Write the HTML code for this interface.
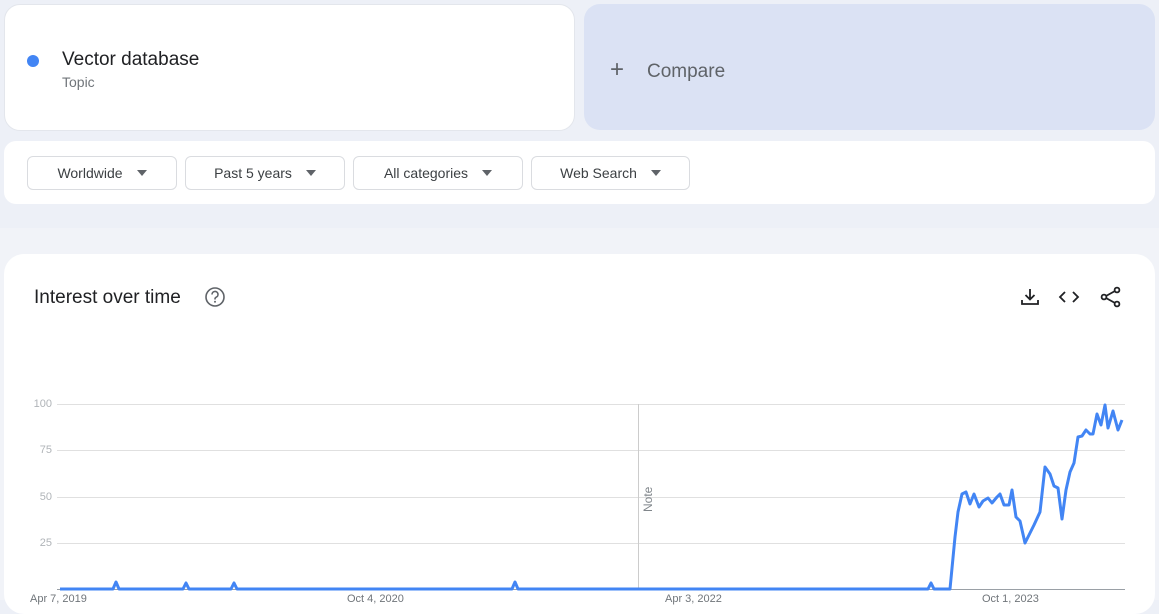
<!DOCTYPE html>
<html><head><meta charset="utf-8"><style>
*{box-sizing:border-box;margin:0;padding:0}
body{width:1159px;height:600px;overflow:hidden;background:#edf0f7;font-family:"Liberation Sans",Arial,sans-serif;position:relative}
.card{position:absolute;background:#fff;border-radius:16px}
.btn{position:absolute;top:156px;height:34px;border:1px solid #dadce0;border-radius:6px;background:#fff;font-size:14px;color:#3c4043;display:flex;align-items:center;justify-content:center;gap:10px}
.btn i{width:0;height:0;border-left:5px solid transparent;border-right:5px solid transparent;border-top:6px solid #5f6368;margin-left:4px}
.yl{position:absolute;left:20px;width:32px;text-align:right;font-size:11px;color:#b0b4b8}
.xl{position:absolute;top:593px;font-size:11px;color:#70757a}
</style></head><body>
<div class="card" style="left:4px;top:4px;width:571px;height:127px;border:1px solid #e3e6ec">
  <div style="position:absolute;left:22px;top:50px;width:12px;height:12px;border-radius:50%;background:#4285f4"></div>
  <div style="position:absolute;left:57px;top:44px;font-size:19px;color:#202124">Vector database</div>
  <div style="position:absolute;left:57px;top:69px;font-size:14px;color:#70757a">Topic</div>
</div>
<div class="card" style="left:584px;top:4px;width:571px;height:126px;background:#dbe2f4">
  <div style="position:absolute;left:26px;top:54px;font-size:24px;color:#5f6368;line-height:24px;font-weight:300">+</div>
  <div style="position:absolute;left:63px;top:57px;font-size:19px;color:#5f6368">Compare</div>
</div>
<div class="card" style="left:4px;top:141px;width:1151px;height:63px;border-radius:12px"></div>
<div class="btn" style="left:27px;width:150px">Worldwide<i></i></div>
<div class="btn" style="left:185px;width:160px">Past 5 years<i></i></div>
<div class="btn" style="left:353px;width:170px">All categories<i></i></div>
<div class="btn" style="left:531px;width:159px">Web Search<i></i></div>
<div style="position:absolute;left:0;top:228px;width:1159px;height:372px;background:#f1f3f8"></div>
<div class="card" style="left:4px;top:254px;width:1151px;height:360px;border-radius:20px"></div>
<div style="position:absolute;left:34px;top:287px;font-size:19px;color:#202124">Interest over time</div>
<svg style="position:absolute;left:204px;top:286px" width="22" height="22" viewBox="0 0 22 22"><circle cx="11" cy="11" r="9" fill="none" stroke="#5f6368" stroke-width="1.6"/><path d="M8 8.5a3 3 0 1 1 4.2 2.7c-.8.4-1.2.9-1.2 1.8v.5" fill="none" stroke="#5f6368" stroke-width="1.6"/><circle cx="11" cy="15.8" r="1" fill="#5f6368"/></svg>
<svg style="position:absolute;left:1018px;top:286px" width="110" height="22" viewBox="0 0 110 22">
<g fill="none" stroke="#202124" stroke-width="1.8">
<path d="M12 3v10M7.5 9l4.5 4.5 4.5-4.5M4 14v4h16v-4"/>
<path d="M47 6l-5 5 5 5M55 6l5 5-5 5"/>
<circle cx="99" cy="4" r="2.4"/><circle cx="86" cy="11" r="2.4"/><circle cx="99" cy="18" r="2.4"/><path d="M88 10l9-5M88 12l9 5"/>
</g></svg>
<svg style="position:absolute;left:0;top:0" width="1159" height="600">
<g stroke="#e0e0e0" stroke-width="1"><line x1="57" y1="404.5" x2="1125" y2="404.5"/><line x1="57" y1="450.5" x2="1125" y2="450.5"/><line x1="57" y1="497.5" x2="1125" y2="497.5"/><line x1="57" y1="543.5" x2="1125" y2="543.5"/></g>
<line x1="57" y1="589.5" x2="1125" y2="589.5" stroke="#9aa0a6"/>
<line x1="638.5" y1="404" x2="638.5" y2="589" stroke="#ccc"/>
<text transform="translate(652,512) rotate(-90)" font-size="12" fill="#80868b" font-family="Liberation Sans,sans-serif">Note</text>
<polyline fill="none" stroke="#4285f4" stroke-width="3" stroke-linejoin="round" points="60,589 113,589 116,582 119,589 183,589 186,583 189,589 231,589 234,583 237,589 512,589 515,582 518,589 928,589 931,583 934,589 950,589 955,537 958,512 962,494 966,492 970,504 974,494 979,507 983,501 988,498 992,503 997,497 1000,494 1004,505 1009,505 1012,490 1016,517 1020,521 1025,543 1030,533 1034,525 1040,512 1045,467 1050,474 1054,486 1058,488 1062,519 1066,490 1070,472 1074,463 1078,437 1082,436 1086,430 1090,434 1093,434 1097,414 1101,425 1105,405 1108,428 1113,411 1118,430 1122,420"/>
</svg>
<div class="yl" style="top:398px">100</div>
<div class="yl" style="top:444px">75</div>
<div class="yl" style="top:491px">50</div>
<div class="yl" style="top:537px">25</div>
<div class="xl" style="left:30px">Apr 7, 2019</div>
<div class="xl" style="left:347px">Oct 4, 2020</div>
<div class="xl" style="left:665px">Apr 3, 2022</div>
<div class="xl" style="left:982px">Oct 1, 2023</div>
</body></html>
